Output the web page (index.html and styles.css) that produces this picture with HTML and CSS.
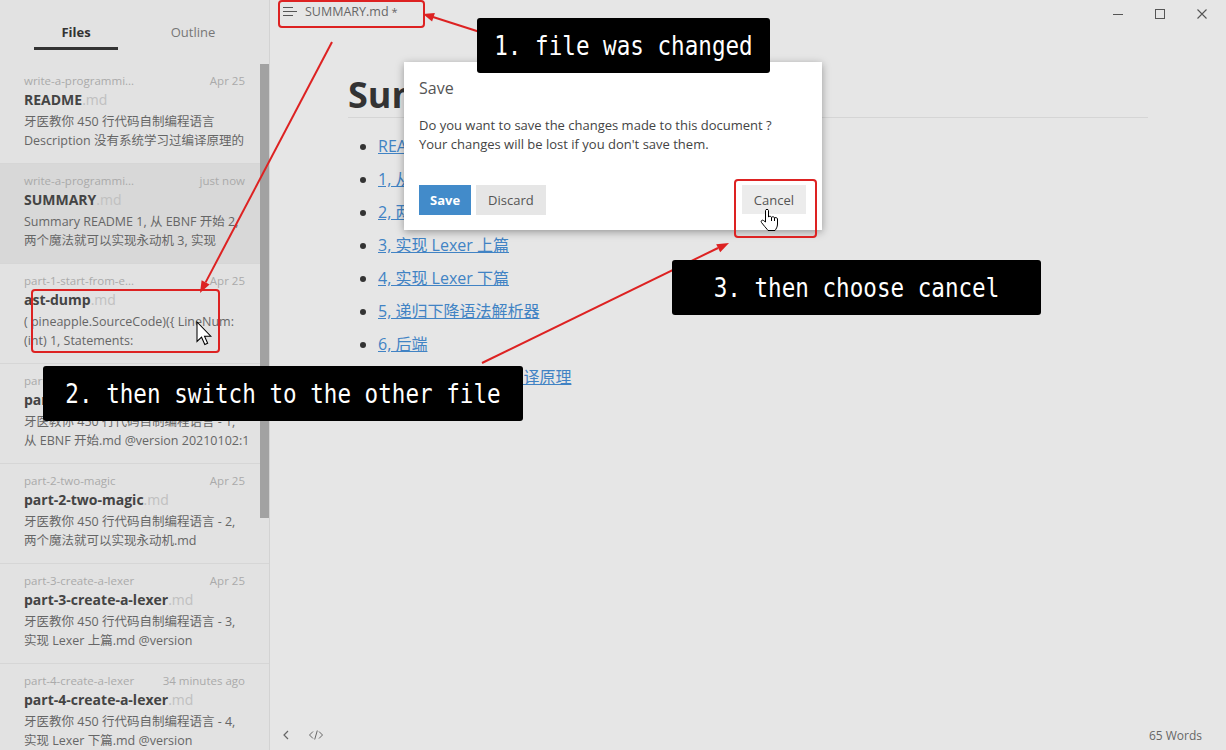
FILE: index.html
```html
<!DOCTYPE html>
<html>
<head>
  <title>SUMMARY.md - Typora</title>
  <link rel="stylesheet" href="styles.css">
</head>
<body>
  <div class="app">
    <aside class="sidebar">
      <div class="tabs">
        <div class="tab active">Files</div>
        <div class="tab">Outline</div>
      </div>
      <div class="file-list">
        <div class="file-item">
          <div class="file-meta"><span>write-a-programmi...</span><span>Apr 25</span></div>
          <div class="file-name">README<span class="ext">.md</span></div>
          <div class="file-excerpt"><span>牙医教你 450 行代码自制编程语言</span><span>Description 没有系统学习过编译原理的</span></div>
        </div>
        <div class="file-item active">
          <div class="file-meta"><span>write-a-programmi...</span><span>just now</span></div>
          <div class="file-name">SUMMARY<span class="ext">.md</span></div>
          <div class="file-excerpt"><span>Summary README 1, 从 EBNF 开始 2,</span><span>两个魔法就可以实现永动机 3, 实现</span></div>
        </div>
        <div class="file-item">
          <div class="file-meta"><span>part-1-start-from-e...</span><span>Apr 25</span></div>
          <div class="file-name">ast-dump<span class="ext">.md</span></div>
          <div class="file-excerpt"><span>( pineapple.SourceCode)({ LineNum:</span><span>(int) 1, Statements:</span></div>
        </div>
        <div class="file-item">
          <div class="file-meta"><span>part-1-start-from-e...</span><span>Apr 25</span></div>
          <div class="file-name">part-1-start-from-ebnf<span class="ext">.md</span></div>
          <div class="file-excerpt"><span>牙医教你 450 行代码自制编程语言 - 1,</span><span>从 EBNF 开始.md @version 20210102:1</span></div>
        </div>
        <div class="file-item">
          <div class="file-meta"><span>part-2-two-magic</span><span>Apr 25</span></div>
          <div class="file-name">part-2-two-magic<span class="ext">.md</span></div>
          <div class="file-excerpt"><span>牙医教你 450 行代码自制编程语言 - 2,</span><span>两个魔法就可以实现永动机.md</span></div>
        </div>
        <div class="file-item">
          <div class="file-meta"><span>part-3-create-a-lexer</span><span>Apr 25</span></div>
          <div class="file-name">part-3-create-a-lexer<span class="ext">.md</span></div>
          <div class="file-excerpt"><span>牙医教你 450 行代码自制编程语言 - 3,</span><span>实现 Lexer 上篇.md @version</span></div>
        </div>
        <div class="file-item">
          <div class="file-meta"><span>part-4-create-a-lexer</span><span>34 minutes ago</span></div>
          <div class="file-name">part-4-create-a-lexer<span class="ext">.md</span></div>
          <div class="file-excerpt"><span>牙医教你 450 行代码自制编程语言 - 4,</span><span>实现 Lexer 下篇.md @version</span></div>
        </div>
        <div class="scrollbar"></div>
      </div>
    </aside>

    <main class="editor">
      <div class="titlebar">
        <div class="doc-title">
          <svg width="14" height="11" viewBox="0 0 14 11"><path d="M0 1.5H10M0 5.5H14M0 9.5H10" stroke="#555" stroke-width="1.2" fill="none"/></svg>
          <span>SUMMARY.md<span class="dirty">*</span></span>
        </div>
        <div class="win-controls">
          <div class="win-btn"><svg width="12" height="12" viewBox="0 0 12 12"><path d="M1 6.5H11" stroke="#555" fill="none"/></svg></div>
          <div class="win-btn"><svg width="12" height="12" viewBox="0 0 12 12"><rect x="1.5" y="1.5" width="9" height="9" stroke="#555" fill="none"/></svg></div>
          <div class="win-btn"><svg width="12" height="12" viewBox="0 0 12 12"><path d="M1.5 1.5L10.5 10.5M10.5 1.5L1.5 10.5" stroke="#555" stroke-width="1.1" fill="none"/></svg></div>
        </div>
      </div>

      <div class="content">
        <div class="doc">
          <h1>Summary</h1>
          <ul>
            <li><a href="#">README</a></li>
            <li><a href="#">1, 从 EBNF 开始</a></li>
            <li><a href="#">2, 两个魔法就可以实现永动机</a></li>
            <li><a href="#">3, 实现 Lexer 上篇</a></li>
            <li><a href="#">4, 实现 Lexer 下篇</a></li>
            <li><a href="#">5, 递归下降语法解析器</a></li>
            <li><a href="#">6, 后端</a></li>
            <li><a href="#">7, 没有系统学习过编译原理</a></li>
          </ul>
        </div>
      </div>

      <div class="footer">
        <div class="footer-left">
          <svg width="8" height="10" viewBox="0 0 8 10"><path d="M6 1L2 5L6 9" stroke="#666" stroke-width="1.2" fill="none"/></svg>
          <svg width="16" height="10" viewBox="0 0 16 10"><path d="M5 1.5L1.5 5L5 8.5M11 1.5L14.5 5L11 8.5M9.3 0.5L6.7 9.5" stroke="#666" stroke-width="1" fill="none"/></svg>
        </div>
        <div class="words">65 Words</div>
      </div>
    </main>
  </div>

  <div class="dialog">
    <div class="dialog-title">Save</div>
    <div class="dialog-text">Do you want to save the changes made to this document ?<br>Your changes will be lost if you don't save them.</div>
    <div class="dialog-buttons">
      <button class="btn btn-primary">Save</button>
      <button class="btn">Discard</button>
      <button class="btn btn-cancel">Cancel</button>
    </div>
  </div>

  <svg class="annotations" width="1226" height="750" viewBox="0 0 1226 750">
    <g fill="none" stroke="#dd2222" stroke-width="2">
      <rect x="279" y="1" width="145" height="26" rx="3"/>
      <rect x="32" y="290" width="187" height="62" rx="3"/>
      <rect x="735" y="180" width="81" height="57" rx="3"/>
      <path d="M483 33L433 17"/>
      <path d="M332 42L205.6 282.4"/>
      <path d="M482 363L718 248"/>
    </g>
    <g fill="#dd2222">
      <polygon points="423,14 432.1,21.6 434.9,13"/>
      <polygon points="200,293 209.6,284.5 201.6,280.3"/>
      <polygon points="729,243 716.2,244.2 720.2,252.3"/>
    </g>
    <path transform="translate(197 322) scale(1.3)" d="M0 0L0 15L3.5 11.7L6 17.3L8.2 16.3L5.8 10.9L10.6 10.9Z" fill="#fff" stroke="#000" stroke-width="0.8"/>
    <g transform="translate(760 208)" fill="#fff" stroke="#000" stroke-width="1">
      <path d="M5.5 12V2.5C5.5 1 8.5 1 8.5 2.5V9C8.5 8 11.5 8 11.5 9.5C11.5 8.5 14.5 8.5 14.5 10C14.5 9.3 17.5 9.3 17.5 11V16C17.5 19 16 21 15 22.5H8C7 21 5 19 3.5 17L1.5 14.5C0.5 13 2 11.5 3.5 12.5L5.5 14Z"/>
      <path d="M11.5 9.5V13M14.5 10V13" fill="none"/>
    </g>
  </svg>

  <div class="callout callout-1"><span>1. file was changed</span></div>
  <div class="callout callout-2"><span>2. then switch to the other file</span></div>
  <div class="callout callout-3"><span>3. then choose cancel</span></div>
</body>
</html>
```

FILE: styles.css
```css
* {
  margin: 0;
  padding: 0;
  box-sizing: border-box;
}

body {
  font-family: "Open Sans", "Noto Sans CJK SC", sans-serif;
  width: 1226px;
  height: 750px;
  overflow: hidden;
  position: relative;
  background: #e6e6e6;
  color: #333;
}

.app {
  display: flex;
  height: 750px;
}

/* sidebar */
.sidebar {
  width: 270px;
  flex-shrink: 0;
  background: #e2e2e2;
  border-right: 1px solid #d3d3d3;
  display: flex;
  flex-direction: column;
}

.tabs {
  display: flex;
  gap: 33px;
  padding-left: 34px;
  height: 64px;
}

.tab {
  width: 84px;
  text-align: center;
  font-size: 13px;
  line-height: 20px;
  padding-top: 22px;
  color: #777;
}

.tab.active {
  color: #333;
  font-weight: bold;
}

.tab.active::after {
  content: "";
  display: block;
  height: 3px;
  margin-top: 5px;
  background: #333;
}

.file-list {
  position: relative;
  flex: 1;
  overflow: hidden;
}

.file-item {
  height: 100px;
  padding: 8px 24px 0 24px;
  border-bottom: 1px solid #d6d6d6;
}

.file-item.active {
  background: #d8d8d8;
}

.file-meta {
  display: flex;
  justify-content: space-between;
  font-size: 11.5px;
  line-height: 18px;
  color: #aaa;
}

.file-name {
  font-size: 14px;
  font-weight: bold;
  line-height: 20px;
  color: #444;
}

.file-name .ext {
  font-weight: normal;
  color: #c0c0c0;
}

.file-excerpt {
  margin-top: 2px;
  font-size: 12.5px;
  line-height: 19px;
  color: #666;
}

.file-excerpt span {
  display: block;
  height: 19px;
  white-space: nowrap;
}

.scrollbar {
  position: absolute;
  left: 260px;
  top: 0;
  width: 9px;
  height: 454px;
  background: #a2a2a2;
}

/* editor */
.editor {
  flex: 1;
  display: flex;
  flex-direction: column;
}

.titlebar {
  height: 28px;
  display: flex;
  justify-content: space-between;
}

.doc-title {
  height: 23px;
  display: flex;
  align-items: center;
  gap: 8px;
  padding-left: 13px;
  font-size: 12.5px;
  color: #666;
}

.doc-title .dirty {
  margin-left: 3px;
  font-size: 11px;
}

.win-controls {
  display: flex;
  padding-right: 3px;
}

.win-btn {
  width: 42px;
  height: 28px;
  display: flex;
  align-items: center;
  justify-content: center;
}

.content {
  flex: 1;
  overflow: hidden;
}

.doc {
  width: 800px;
  margin: 0 auto;
  padding-top: 45px;
}

h1 {
  font-size: 36px;
  line-height: 44px;
  font-weight: bold;
  color: #333;
  border-bottom: 1px solid #d5d5d5;
}

.doc ul {
  margin-top: 16px;
  padding-left: 30px;
}

.doc li {
  font-size: 16px;
  line-height: 25px;
  margin-bottom: 8px;
}

.doc a {
  color: #4183c4;
}

.footer {
  height: 30px;
  display: flex;
  align-items: center;
  justify-content: space-between;
  padding: 0 24px 0 12px;
}

.footer-left {
  display: flex;
  align-items: center;
  gap: 18px;
}

.words {
  font-size: 12px;
  color: #666;
}

/* save dialog */
.dialog {
  position: absolute;
  left: 404px;
  top: 62px;
  width: 418px;
  height: 168px;
  padding: 15px 16px 15px 15px;
  background: #fff;
  box-shadow: 0 2px 8px rgba(0, 0, 0, 0.35);
  display: flex;
  flex-direction: column;
}

.dialog-title {
  font-size: 16px;
  line-height: 22px;
  color: #555;
}

.dialog-text {
  margin-top: 17px;
  font-size: 13px;
  line-height: 19px;
  color: #444;
}

.dialog-buttons {
  margin-top: auto;
  display: flex;
  gap: 5px;
}

.btn {
  height: 30px;
  padding: 0 12px;
  border: none;
  font-family: inherit;
  font-size: 13px;
  background: #e6e6e6;
  color: #555;
}

.btn-primary {
  padding: 0 11px;
  background: #428bca;
  color: #fff;
  font-weight: bold;
}

.btn-cancel {
  margin-left: auto;
  height: 29px;
  background: #ececec;
}

/* annotations drawn over the screenshot */
.annotations {
  position: absolute;
  top: 0;
  left: 0;
  pointer-events: none;
}

.callout {
  position: absolute;
  height: 55px;
  display: flex;
  align-items: center;
  justify-content: center;
  background: #000;
  color: #fff;
  border-radius: 3px;
  font-family: "DejaVu Sans Mono", monospace;
  font-size: 22.6px;
}

.callout span {
  display: inline-block;
  white-space: pre;
  transform: scaleY(1.15);
}

.callout-1 {
  left: 477px;
  top: 18px;
  width: 293px;
}

.callout-2 {
  left: 43px;
  top: 366px;
  width: 480px;
}

.callout-3 {
  left: 672px;
  top: 260px;
  width: 369px;
}
```
